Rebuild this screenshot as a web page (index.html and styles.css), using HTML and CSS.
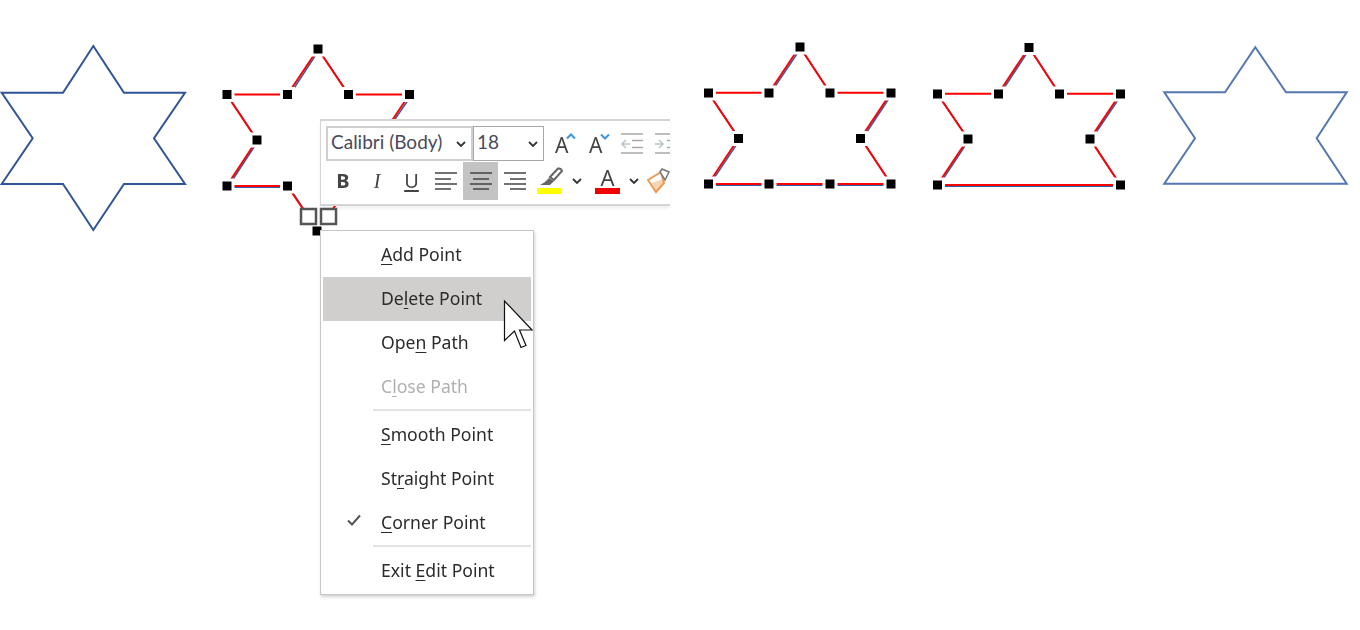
FILE: index.html
```html
<!DOCTYPE html>
<html lang="en">
<head>
<meta charset="utf-8">
<title>Edit Points</title>
<link rel="stylesheet" href="styles.css">
</head>
<body>
<main class="canvas">
  <svg class="layer" width="1360" height="630" viewBox="0 0 1360 630" aria-hidden="true">
    <!-- Original star -->
    <polygon class="star" points="93.3,46 124,92.7 185,92.7 154,138.3 185,184 124,184 93.3,230 63,184 1.7,184 32.7,138.3 1.7,92.7 63,92.7"/>

    <!-- Star in edit mode -->
    <g>
      <path class="edge-blue" d="M288 95 318 49 349 95M410 95 379 140 410 186M318 231 288 186H227L257 140 227 95"/>
      <polygon class="edge-red" points="318,49 348.5,94.5 409.5,94.5 379,140 409.5,186 348.5,186 318,231 287.5,186 226.7,186 257,140 226.7,94.5 287.5,94.5"/>
      <rect class="handle" x="313.5" y="44.5" width="9" height="9"/>
      <rect class="handle" x="283" y="90" width="9" height="9"/>
      <rect class="handle" x="222.5" y="90" width="9" height="9"/>
      <rect class="handle" x="252.5" y="135.5" width="9" height="9"/>
      <rect class="handle" x="222.5" y="181.5" width="9" height="9"/>
      <rect class="handle" x="283" y="181.5" width="9" height="9"/>
      <rect class="handle" x="344" y="90" width="9" height="9"/>
      <rect class="handle" x="405" y="90" width="9" height="9"/>
      <rect class="handle" x="312.5" y="226.5" width="9" height="9"/>
    </g>

    <!-- Star with three bottom points -->
    <g>
      <path class="edge-blue" d="M769 93 800 47 830 93M891 93 861 138.5 891 184H708.500L739 138.500 708.500 93"/>
      <polygon class="edge-red" points="799.700,46.700 830,92.700 891,92.700 860.700,138.300 891,184 708.300,184 738.700,138.300 708.300,92.700 769,92.700"/>
      <rect class="handle" x="795.500" y="42.500" width="9" height="9"/>
      <rect class="handle" x="764.500" y="88.500" width="9" height="9"/>
      <rect class="handle" x="704" y="88.500" width="9" height="9"/>
      <rect class="handle" x="734" y="134" width="9" height="9"/>
      <rect class="handle" x="704" y="179.500" width="9" height="9"/>
      <rect class="handle" x="764.500" y="179.500" width="9" height="9"/>
      <rect class="handle" x="825.500" y="179.500" width="9" height="9"/>
      <rect class="handle" x="886.500" y="179.500" width="9" height="9"/>
      <rect class="handle" x="856" y="134" width="9" height="9"/>
      <rect class="handle" x="886.500" y="88.500" width="9" height="9"/>
      <rect class="handle" x="825.500" y="88.500" width="9" height="9"/>
    </g>

    <!-- Star with flat bottom -->
    <g>
      <path class="edge-blue" d="M998.500 94 1029 47.500 1059.500 94M1120.500 94 1090 139 1120.500 185H937.500L968 139 937.500 94"/>
      <polygon class="edge-red" points="1029,47.300 1059.300,93.700 1120.300,93.700 1090,139 1120.300,185 937.300,185 968,139 937.300,93.700 998.300,93.700"/>
      <rect class="handle" x="1024.500" y="43" width="9" height="9"/>
      <rect class="handle" x="994" y="89.500" width="9" height="9"/>
      <rect class="handle" x="933" y="89.500" width="9" height="9"/>
      <rect class="handle" x="963.500" y="134.500" width="9" height="9"/>
      <rect class="handle" x="933" y="180.500" width="9" height="9"/>
      <rect class="handle" x="1116" y="180.500" width="9" height="9"/>
      <rect class="handle" x="1085.500" y="134.500" width="9" height="9"/>
      <rect class="handle" x="1116" y="89.500" width="9" height="9"/>
      <rect class="handle" x="1055" y="89.500" width="9" height="9"/>
    </g>

    <!-- Finished star -->
    <polygon class="star star-soft" points="1255.300,47.300 1286,92.300 1346.700,92.300 1316.700,138.300 1346.700,183.700 1164.300,183.700 1195,138.300 1164.300,92.300 1225,92.300"/>
  </svg>

  <section class="toolbar">
    <div class="toolbar-row">
      <div class="combo combo-font"><span class="combo-text">Calibri (Body)</span>
        <svg class="chev" width="10" height="6" viewBox="0 0 10 6"><path d="M1 1 5 5 9 1"/></svg></div>
      <div class="combo combo-size"><span class="combo-text">18</span>
        <svg class="chev" width="10" height="6" viewBox="0 0 10 6"><path d="M1 1 5 5 9 1"/></svg></div>
      <div class="tool tool-top">
        <svg width="26" height="32" viewBox="0 0 26 32"><text class="icon-a" x="2" y="24.500">A</text><path class="caret caret-blue" d="M14 10.500 18 6.500 22 10.500"/></svg>
      </div>
      <div class="tool tool-top">
        <svg width="26" height="32" viewBox="0 0 26 32"><text class="icon-a" x="3" y="24.500">A</text><path class="caret caret-blue" d="M15 6.500 19 10.500 23 6.500"/></svg>
      </div>
      <div class="tool tool-top">
        <svg width="26" height="24" viewBox="0 0 26 24"><path class="rule-muted" d="M1 2H23M12 8.500H23M12 15.500H23M1 21H23"/><path class="arrow-muted" d="M10 12H2M6 8 2 12 6 16"/></svg>
      </div>
      <div class="tool tool-top">
        <svg width="26" height="24" viewBox="0 0 26 24"><path class="rule-muted" d="M2 2H25M14 8.500H25M14 15.500H25M2 21H25"/><path class="arrow-muted" d="M2 12H10M6 8 10 12 6 16"/></svg>
      </div>
    </div>
    <div class="toolbar-row toolbar-row-second">
      <div class="tool tool-34"><span class="glyph glyph-b">B</span></div>
      <div class="tool tool-34"><span class="glyph glyph-i">I</span></div>
      <div class="tool tool-35"><span class="glyph glyph-u">U</span></div>
      <div class="tool tool-34">
        <svg width="24" height="20" viewBox="0 0 24 20"><path class="rule" d="M1 2H23M1 8H17M1 13H23M1 18H17"/></svg>
      </div>
      <div class="tool tool-35 tool-active">
        <svg width="24" height="20" viewBox="0 0 24 20"><path class="rule" d="M1 2H23M4 8H20M1 13H23M4 18H20"/></svg>
      </div>
      <div class="tool tool-34">
        <svg width="24" height="20" viewBox="0 0 24 20"><path class="rule" d="M1 2H23M7 8H23M1 13H23M7 18H23"/></svg>
      </div>
      <div class="tool tool-36">
        <svg width="28" height="30" viewBox="0 0 28 30"><path class="pen" d="M14 11 22 2.500Q25 2 26 5L18 14Z"/><path class="pen-tip" d="M13 12 18 15 14 19H4L9 16Z"/><rect class="swatch-yellow" x="1" y="22" width="25" height="6"/></svg>
      </div>
      <div class="tool tool-chev"><svg class="chev" width="10" height="6" viewBox="0 0 10 6"><path d="M1 1 5 5 9 1"/></svg></div>
      <div class="tool tool-color">
        <svg width="28" height="36" viewBox="0 0 28 36"><text class="icon-a-large" x="14.500" y="23">A</text><rect class="swatch-red" x="2" y="25" width="25" height="6"/></svg>
      </div>
      <div class="tool tool-chev-wide"><svg class="chev" width="10" height="6" viewBox="0 0 10 6"><path d="M1 1 5 5 9 1"/></svg></div>
      <div class="tool tool-35">
        <svg class="painter" width="24" height="26" viewBox="0 0 24 26"><path class="brush-fill" d="M5 15 16 11 17 15 9 24Z"/><path class="brush" d="M1 12 14 4 17 15 9 24Z"/><path class="brush-handle" d="M13 4 15 1 22 4 18 12Z"/></svg>
      </div>
    </div>
  </section>

  <nav class="menu">
    <div class="item item-upper"><span><u>A</u>dd Point</span></div>
    <div class="item item-upper item-hover"><span>De<u>l</u>ete Point</span></div>
    <div class="item item-upper"><span>Ope<u>n</u> Path</span></div>
    <div class="item item-upper item-disabled"><span>C<u>l</u>ose Path</span></div>
    <div class="separator"></div>
    <div class="item"><span><u>S</u>mooth Point</span></div>
    <div class="item"><span>St<u>r</u>aight Point</span></div>
    <div class="item item-checked">
      <svg class="check" width="14" height="12" viewBox="0 0 14 12"><path d="M1 6.500 5 10.500 13 1.500"/></svg>
      <span><u>C</u>orner Point</span>
    </div>
    <div class="separator separator-tall"></div>
    <div class="item"><span>Exit <u>E</u>dit Point</span></div>
  </nav>

  <svg class="layer" width="1360" height="630" viewBox="0 0 1360 630" aria-hidden="true">
    <rect class="snap" x="301" y="209" width="15" height="15"/>
    <rect class="snap" x="321" y="209" width="15" height="15"/>
    <path class="cursor" d="M504.500 301V340.500L514.500 331 521 347.500 526 345.500 519.500 330H532Z"/>
  </svg>
</main>
</body>
</html>
```
FILE: styles.css
```css
html, body {
  margin: 0;
  padding: 0;
  background: #fff;
}

.canvas {
  position: relative;
  width: 1360px;
  height: 630px;
  overflow: hidden;
  font-family: "Noto Sans", "Open Sans", sans-serif;
  color: #2b2b2b;
  filter: blur(0.350px);
}

.layer {
  position: absolute;
  left: 0;
  top: 0;
  display: block;
}

/* Stars */
.star {
  fill: none;
  stroke: #2f5597;
  stroke-width: 2;
  stroke-linejoin: miter;
}

.star-soft {
  stroke: #5477b0;
}

.edge-blue {
  fill: none;
  stroke: #2f5fa8;
  stroke-width: 1.600;
  transform: translate(0.900px, 1.100px);
}

.edge-red {
  fill: none;
  stroke: #ff0000;
  stroke-width: 2;
}

.handle {
  fill: #000;
  stroke: #fff;
  stroke-width: 6px;
  paint-order: stroke;
}

/* Mini toolbar */
.toolbar {
  position: absolute;
  left: 320px;
  top: 119px;
  width: 350px;
  height: 87px;
  box-sizing: border-box;
  overflow: hidden;
  padding: 5px 0 0 5px;
  background: #fff;
  border: solid #d4d4d4;
  border-width: 2px 0 2px 1px;
  box-shadow: 0 3px 3px rgba(0, 0, 0, 0.060);
}

.toolbar-row {
  display: flex;
  align-items: center;
  width: 380px;
  height: 35px;
}

.toolbar-row-second {
  height: 38px;
  margin-top: 1px;
}

.combo {
  display: flex;
  align-items: center;
  justify-content: space-between;
  height: 35px;
  box-sizing: border-box;
  flex: none;
  background: #fff;
  padding: 0 5px 0 3px;
}

.combo-font {
  width: 147px;
  border: 2px solid #cfcfcf;
}

.combo-size {
  width: 71px;
  margin-right: 5px;
  border: 1px solid #a8a8a8;
}

.combo-text {
  margin-top: -4px;
  font-family: "Lato", "Carlito", sans-serif;
  font-size: 19px;
  color: #4a4a5a;
}

.chev {
  flex: none;
}

.chev path {
  fill: none;
  stroke: #333;
  stroke-width: 1.800;
}

.tool {
  display: flex;
  align-items: center;
  justify-content: center;
  flex: none;
  height: 38px;
}

.tool-top {
  width: 33.500px;
  height: 35px;
}

.tool-34 { width: 34px; }
.tool-35 { width: 35px; }
.tool-36 { width: 36px; }
.tool-chev { width: 18px; }
.tool-color { width: 36px; margin-left: 3px; }
.tool-chev-wide { width: 18px; margin-right: 1px; }

.tool-active {
  background: #c3c3c3;
}

.glyph {
  font-size: 20px;
  line-height: 1;
  color: #444;
}

.glyph-b {
  font-weight: 700;
}

.glyph-i {
  font-family: "Liberation Serif", serif;
  font-style: italic;
  font-size: 20px;
}

.glyph-u {
  text-decoration: underline;
  text-underline-offset: 2px;
}

.icon-a {
  font-family: "Noto Sans", sans-serif;
  font-size: 21px;
  fill: #444;
}

.icon-a-large {
  font-family: "Noto Sans", sans-serif;
  font-size: 22px;
  text-anchor: middle;
  fill: #444;
}

.caret {
  fill: none;
  stroke-width: 2;
}

.caret-blue {
  stroke: #3a96dd;
}

.rule {
  fill: none;
  stroke: #444;
  stroke-width: 1.500;
}

.rule-muted {
  fill: none;
  stroke: #a8a8a8;
  stroke-width: 1.500;
}

.arrow-muted {
  fill: none;
  stroke: #b8c4c8;
  stroke-width: 1.500;
}

.pen {
  fill: #fff;
  stroke: #666;
  stroke-width: 2;
}

.pen-tip {
  fill: #666;
}

.swatch-yellow {
  fill: #ffff00;
}

.swatch-red {
  fill: #f00000;
}

.painter {
  margin-right: 5px;
}

.brush {
  fill: none;
  stroke: #ed9b50;
  stroke-width: 2;
}

.brush-fill {
  fill: #f8d5b0;
}

.brush-handle {
  fill: #fff;
  stroke: #777;
  stroke-width: 1.500;
}

/* Context menu */
.menu {
  position: absolute;
  left: 320px;
  top: 230px;
  width: 214px;
  height: 365px;
  box-sizing: border-box;
  padding: 2px;
  background: #fff;
  border: 1px solid #c6c6c6;
  box-shadow: 1px 2px 3px rgba(0, 0, 0, 0.180);
  font-size: 17.600px;
  color: #2b2b2b;
}

.item {
  position: relative;
  display: flex;
  align-items: center;
  height: 44px;
  box-sizing: border-box;
  padding-left: 58px;
  white-space: nowrap;
}

.item-upper {
  padding-bottom: 2px;
}

.item u {
  text-underline-offset: 3px;
  text-decoration-thickness: 1px;
}

.item-hover {
  background: #d0cfcd;
}

.item-disabled {
  color: #b0b0b0;
}

.check {
  position: absolute;
  left: 24px;
  top: 14px;
}

.check path {
  fill: none;
  stroke: #555;
  stroke-width: 2;
}

.separator {
  height: 2px;
  margin: 0 0 1px 50px;
  background: #e2e2e2;
}

.separator-tall {
  margin: 1px 0 1px 50px;
}

.snap {
  fill: #fff;
  stroke: #555;
  stroke-width: 2.500;
}

.cursor {
  fill: #fff;
  stroke: #111;
  stroke-width: 1.200;
  stroke-linejoin: miter;
}
```
